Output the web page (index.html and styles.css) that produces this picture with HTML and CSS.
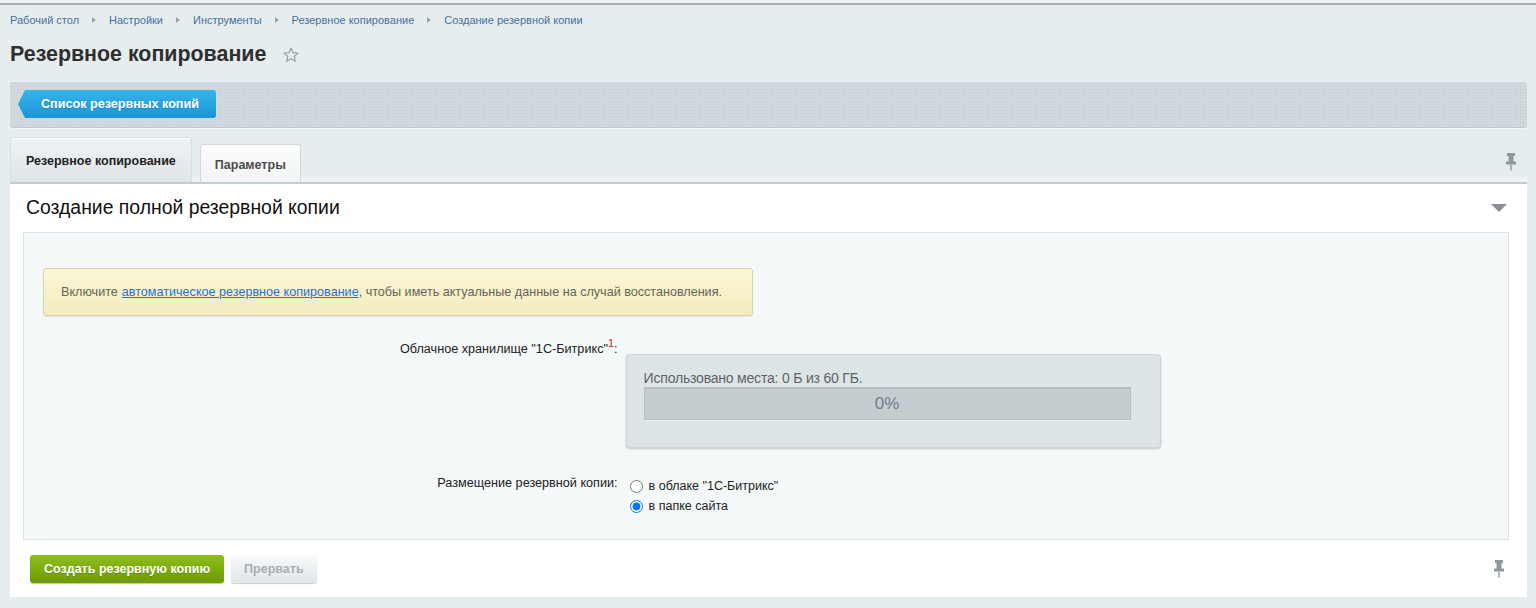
FILE: index.html
```html
<!DOCTYPE html>
<html lang="ru">
<head>
<meta charset="utf-8">
<title>Резервное копирование</title>
<link rel="stylesheet" href="styles.css">
</head>
<body>
<div class="topline"></div>
<div class="page">
  <nav class="crumbs">
    <a href="#">Рабочий стол</a><span class="sep"></span>
    <a href="#">Настройки</a><span class="sep"></span>
    <a href="#">Инструменты</a><span class="sep"></span>
    <a href="#">Резервное копирование</a><span class="sep"></span>
    <a href="#">Создание резервной копии</a>
  </nav>
  <div class="title-row">
    <h1 class="title">Резервное копирование</h1>
    <svg class="star" width="18" height="18" viewBox="0 0 24 24"><path d="M12 2.8l2.7 6.1 6.6.6-5 4.4 1.5 6.5L12 17l-5.8 3.4 1.5-6.5-5-4.4 6.6-.6z" fill="none" stroke="#9aa3a8" stroke-width="1.7" stroke-linejoin="round"/></svg>
  </div>
  <div class="toolbar">
    <a class="btn-list" href="#">Список резервных копий</a>
  </div>
  <div class="tabs">
    <div class="tab tab-active">Резервное копирование</div>
    <div class="tab">Параметры</div>
    <div class="tabs-fill"></div>
    <svg class="pin" width="12" height="18" viewBox="0 0 12 18"><rect x="2" y="0" width="8" height="3" fill="#8f989d"/><rect x="3.5" y="3" width="5" height="6" fill="#8f989d"/><rect x="1" y="8.5" width="10" height="3" fill="#8f989d"/><rect x="5.3" y="11.5" width="1.4" height="6" fill="#8f989d"/></svg>
  </div>
  <div class="panel">
    <div class="panel-head">
      <h2 class="panel-title">Создание полной резервной копии</h2>
      <span class="collapse"></span>
    </div>
    <div class="inner">
      <div class="notice">Включите <a href="#">автоматическое резервное копирование</a>, чтобы иметь актуальные данные на случай восстановления.</div>
      <div class="form">
        <div class="f-label f-label-cloud">Облачное хранилище "1С-Битрикс"<sup class="req">1</sup>:</div>
        <div class="f-value f-value-cloud">
          <div class="storage">
            <div class="storage-text">Использовано места: 0 Б из 60 ГБ.</div>
            <div class="bar">0%</div>
          </div>
        </div>
        <div class="f-label f-label-radio">Размещение резервной копии:</div>
        <div class="f-value f-value-radio">
          <label class="radio"><input type="radio" name="place"> в облаке "1С-Битрикс"</label>
          <label class="radio"><input type="radio" name="place" checked> в папке сайта</label>
        </div>
      </div>
    </div>
    <div class="footer">
      <button class="btn-green">Создать резервную копию</button>
      <button class="btn-gray" disabled>Прервать</button>
      <div class="tabs-fill"></div>
      <svg class="pin pin-bottom" width="12" height="18" viewBox="0 0 12 18"><rect x="2" y="0" width="8" height="3" fill="#8f989d"/><rect x="3.5" y="3" width="5" height="6" fill="#8f989d"/><rect x="1" y="8.5" width="10" height="3" fill="#8f989d"/><rect x="5.3" y="11.5" width="1.4" height="6" fill="#8f989d"/></svg>
    </div>
  </div>
</div>
</body>
</html>
```
FILE: styles.css
```css
* { box-sizing: border-box; }
html, body { margin: 0; padding: 0; }
body {
  background: #e6edef;
  font-family: "Liberation Sans", Arial, sans-serif;
  color: #000;
  height: 608px;
  overflow: hidden;
}
.topline {
  height: 5px;
  background: #eef2f3;
  border-bottom: 2px solid #a9b1b5;
}
.page { padding: 0 9px 0 10px; }

.crumbs {
  margin-top: 8px;
  font-size: 11px;
  line-height: 14px;
  display: flex;
  align-items: center;
}
.crumbs a { color: #46709f; text-decoration: none; }
.crumbs .sep {
  display: inline-block;
  width: 0; height: 0;
  border-left: 4px solid #98a2a8;
  border-top: 3px solid transparent;
  border-bottom: 3px solid transparent;
  margin: 0 13px 0 13px;
}

.title-row {
  display: flex;
  align-items: center;
  margin-top: 15px;
  height: 24px;
}
.title {
  margin: 0;
  font-size: 21.4px;
  line-height: 24px;
  font-weight: bold;
  color: #2f2f2f;
}
.star { margin-left: 16px; margin-top: 1px; }

.toolbar {
  margin-top: 16px;
  height: 46px;
  padding: 8px 8px;
  border-radius: 3px;
  background-color: #d0d9dd;
  background-image: radial-gradient(circle, #c3cdd1 0.8px, transparent 1px);
  background-size: 3px 3px;
  box-shadow: inset 0 -1px 0 #bfc9cd, 0 1px 0 #f3f6f7;
}
.btn-list {
  display: inline-flex;
  align-items: center;
  height: 28px;
  padding: 0 17px 0 23px;
  font-size: 12.6px;
  font-weight: bold;
  color: #fff;
  text-decoration: none;
  background: linear-gradient(#35b6ec, #1b93d4);
  clip-path: polygon(7px 0, 100% 0, 100% 100%, 7px 100%, 0 50%);
  border-radius: 0 3px 3px 0;
  text-shadow: 0 1px 0 rgba(0,0,0,.18);
}

.tabs {
  margin-top: 9px;
  display: flex;
  align-items: flex-end;
  height: 45px;
}
.tab {
  height: 38px;
  margin-right: 8px;
  padding: 2px 14px 0;
  display: flex;
  align-items: center;
  font-size: 12.5px;
  font-weight: bold;
  color: #4c4c4c;
  background: linear-gradient(#fdfdfd, #f1f3f4);
  border: 1px solid #d2d9dc;
  border-bottom: none;
  border-radius: 3px 3px 0 0;
}
.tab-active {
  height: 45px;
  padding: 2px 15px 0;
  color: #222;
  background: linear-gradient(#eef2f3, #dfe6e8);
  border-color: #d8dfe2;
  box-shadow: inset 0 1px 0 #fff;
}
.tabs-fill { flex: 1; }
.pin { align-self: center; margin: 4px 10px 0 0; }

.panel {
  background: #fff;
  border-top: 2px solid #c3ccd0;
  box-shadow: 0 -5px 0 #eef2f3;
  padding: 11px 18px 14px 13px;
}
.panel-head {
  display: flex;
  align-items: center;
  height: 24px;
}
.panel-title {
  margin: 0 0 0 3px;
  font-size: 19.4px;
  line-height: 24px;
  font-weight: normal;
  color: #111;
  flex: 1;
}
.collapse {
  width: 0; height: 0;
  border-top: 8px solid #8a9095;
  border-left: 8px solid transparent;
  border-right: 8px solid transparent;
  margin-right: 2px;
  margin-top: 1px;
}

.inner {
  margin-top: 13px;
  background: #f5f8f9;
  border: 1px solid #dde4e7;
  padding: 35px 19px 23px 19px;
}
.notice {
  width: 710px;
  height: 48px;
  display: flex;
  align-items: center;
  padding: 0 0 0 17px;
  font-size: 12.6px;
  color: #66655a;
  background: linear-gradient(#fbf6d5, #f3ebbf);
  border: 1px solid #dcd3a8;
  border-radius: 3px;
  box-shadow: 0 1px 1px rgba(0,0,0,.08);
}
.notice a { color: #2672d6; text-decoration: underline; margin: 0 0 0 4px; }

.form {
  display: grid;
  grid-template-columns: 40% 60%;
  margin: 0 -19px;
}
.f-label {
  text-align: right;
  font-size: 12.65px;
  line-height: 16px;
  color: #222;
  padding-right: 0;
}
.f-label-cloud { padding-top: 25px; }
.req { color: #e02222; font-size: 11px; line-height: 0; vertical-align: 6px; }
.f-value-cloud { padding-top: 38px; padding-left: 8px; }
.storage {
  width: 535px;
  height: 94px;
  background: #dde4e7;
  border: 1px solid #cdd5d8;
  border-radius: 4px;
  box-shadow: 0 1px 2px rgba(0,0,0,.2);
  padding: 14px 29px 0 17px;
}
.storage-text {
  font-size: 14px;
  line-height: 18px;
  color: #5d6467;
  letter-spacing: -0.2px;
}
.bar {
  height: 33px;
  background: #c5cdd0;
  border: 1px solid #b8c1c5;
  box-shadow: inset 0 1px 0 #b3bcc0, 0 1px 0 #eef2f3;
  text-align: center;
  font-size: 17px;
  line-height: 31px;
  color: #6f7f8c;
}
.f-label-radio { padding-top: 27px; }
.f-value-radio { padding-top: 28px; padding-left: 4px; }
.radio {
  display: flex;
  align-items: center;
  font-size: 12.5px;
  line-height: 20px;
  height: 20px;
  color: #222;
}
.radio input { margin: 0 6px 0 8px; width: 13px; height: 13px; }

.footer {
  margin-top: 15px;
  display: flex;
  align-items: center;
  padding-left: 7px;
}
.btn-green {
  height: 28px;
  padding: 0 14px;
  font-family: inherit;
  font-size: 12.5px;
  font-weight: bold;
  color: #fff;
  border: none;
  border-radius: 3px;
  background: linear-gradient(#8fbe1b, #6b9a07);
  box-shadow: 0 1px 1px rgba(0,0,0,.25);
  text-shadow: 0 1px 0 rgba(0,0,0,.2);
}
.btn-gray {
  margin-left: 7px;
  height: 28px;
  padding: 0 13px;
  font-family: inherit;
  font-size: 12.5px;
  font-weight: bold;
  color: #a7afb4;
  border: none;
  border-radius: 3px;
  background: linear-gradient(#f8f9fa, #e0e6e9);
  box-shadow: 0 1px 1px rgba(0,0,0,.2);
}
.pin-bottom { margin: 0 4px 0 0; }
```
